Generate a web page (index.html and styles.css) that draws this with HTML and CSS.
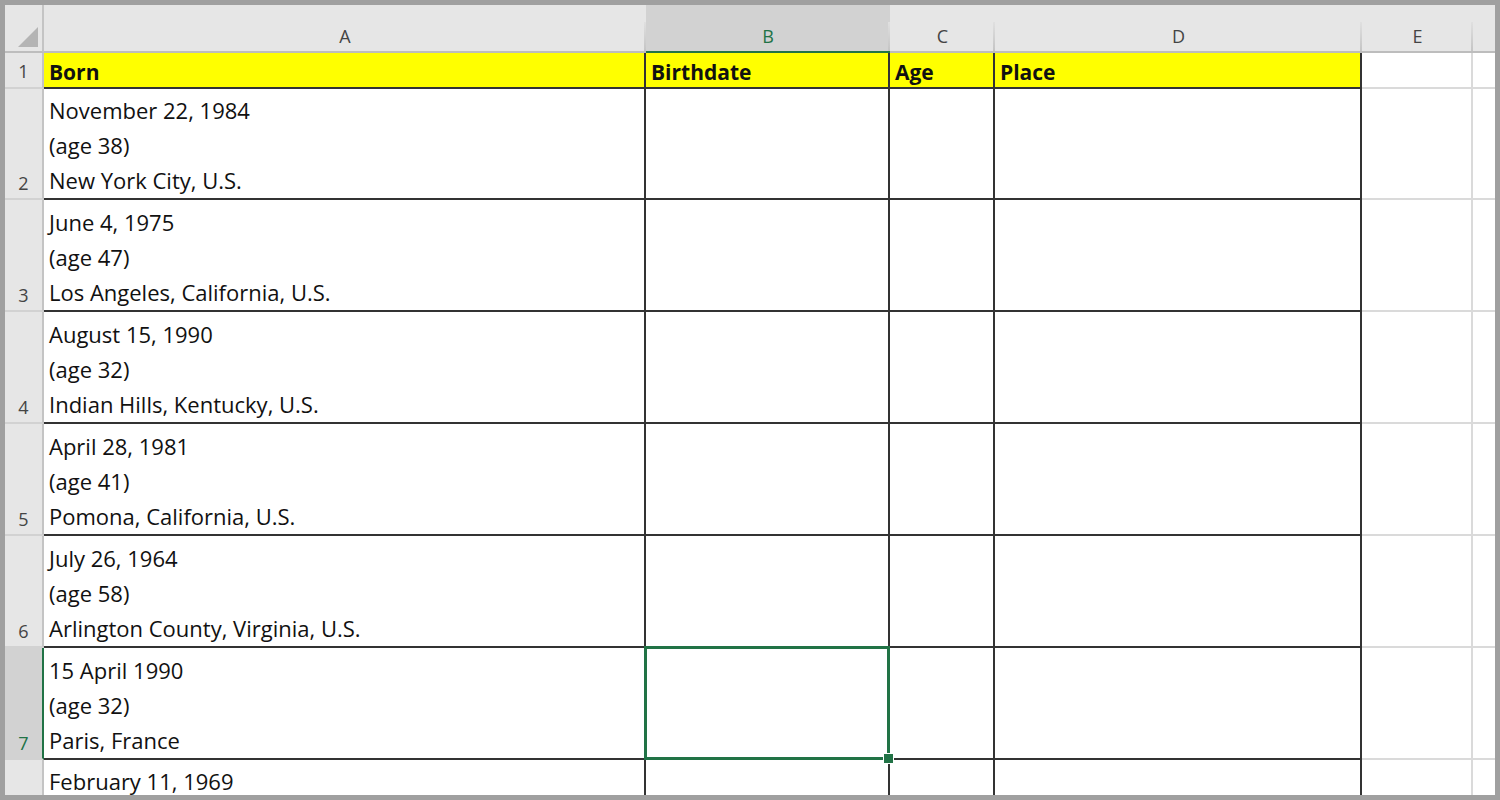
FILE: index.html
```html
<!DOCTYPE html>
<html>
<head>
<meta charset="utf-8">
<link rel="stylesheet" href="styles.css">
</head>
<body>
<div class="frame">
  <div class="sheet">
    <div class="corner"><svg width="22" height="22" viewBox="0 0 22 22"><polygon points="21,1 21,21 1,21" fill="#b4b4b4"/></svg></div>
    <div class="colhead">A</div>
    <div class="colhead sel">B</div>
    <div class="colhead">C</div>
    <div class="colhead">D</div>
    <div class="colhead">E</div>
    <div class="colhead last"></div>

    <div class="rowhead short">1</div>
    <div class="cell hdr"><b>Born</b></div>
    <div class="cell hdr"><b>Birthdate</b></div>
    <div class="cell hdr"><b>Age</b></div>
    <div class="cell hdr"><b>Place</b></div>
    <div class="plain"></div>
    <div class="plain last"></div>

    <div class="rowhead">2</div>
    <div class="cell text"><span>November 22, 1984</span><span>(age 38)</span><span>New York City, U.S.</span></div>
    <div class="cell"></div><div class="cell"></div><div class="cell"></div>
    <div class="plain"></div><div class="plain last"></div>

    <div class="rowhead">3</div>
    <div class="cell text"><span>June 4, 1975</span><span>(age 47)</span><span>Los Angeles, California, U.S.</span></div>
    <div class="cell"></div><div class="cell"></div><div class="cell"></div>
    <div class="plain"></div><div class="plain last"></div>

    <div class="rowhead">4</div>
    <div class="cell text"><span>August 15, 1990</span><span>(age 32)</span><span>Indian Hills, Kentucky, U.S.</span></div>
    <div class="cell"></div><div class="cell"></div><div class="cell"></div>
    <div class="plain"></div><div class="plain last"></div>

    <div class="rowhead">5</div>
    <div class="cell text"><span>April 28, 1981</span><span>(age 41)</span><span>Pomona, California, U.S.</span></div>
    <div class="cell"></div><div class="cell"></div><div class="cell"></div>
    <div class="plain"></div><div class="plain last"></div>

    <div class="rowhead">6</div>
    <div class="cell text"><span>July 26, 1964</span><span>(age 58)</span><span>Arlington County, Virginia, U.S.</span></div>
    <div class="cell"></div><div class="cell"></div><div class="cell"></div>
    <div class="plain"></div><div class="plain last"></div>

    <div class="rowhead sel">7</div>
    <div class="cell text"><span>15 April 1990</span><span>(age 32)</span><span>Paris, France</span></div>
    <div class="cell active"></div><div class="cell"></div><div class="cell"></div>
    <div class="plain"></div><div class="plain last"></div>

    <div class="rowhead"></div>
    <div class="cell text toptext"><span>February 11, 1969</span></div>
    <div class="cell"></div><div class="cell"></div><div class="cell"></div>
    <div class="plain"></div><div class="plain last"></div>
  </div>
</div>
</body>
</html>
```

FILE: styles.css
```css
* { box-sizing: border-box; }
html, body { margin: 0; padding: 0; }
body { background: #a0a0a0; }
.frame {
  width: 1500px;
  height: 800px;
  border: 5px solid #a0a0a0;
  background: #ffffff;
  overflow: hidden;
}
.sheet {
  display: grid;
  grid-template-columns: 39px 602px 244px 105px 367px 111px 1fr;
  grid-template-rows: 48px 36px 111px repeat(6, 112px);
  font-family: "Open Sans", "Noto Sans", sans-serif;
  color: #111111;
}
.corner {
  background: #e6e6e6;
  border-right: 2px solid #c4c4c4;
  border-bottom: 2px solid #bdbdbd;
  display: flex;
  align-items: flex-end;
  justify-content: flex-end;
  padding: 0 3px 3px 0;
}
.colhead {
  position: relative;
  background: #e6e6e6;
  border-bottom: 2px solid #bdbdbd;
  display: flex;
  align-items: center;
  justify-content: center;
  font-size: 18px;
  color: #444444;
  padding-top: 16px;
}
.colhead::after {
  content: "";
  position: absolute;
  right: 0;
  top: 17px;
  bottom: 0;
  width: 2px;
  background: linear-gradient(#e0e0e0, #c4c4c4);
}
.colhead.sel {
  background: #d2d2d2;
  border-bottom-color: #217346;
  color: #217346;
}
.colhead.last::after { display: none; }
.rowhead {
  background: #e6e6e6;
  border-right: 2px solid #c4c4c4;
  border-bottom: 2px solid #d2d2d2;
  display: flex;
  align-items: flex-end;
  justify-content: center;
  font-size: 18px;
  color: #444444;
  padding-bottom: 3px;
}
.rowhead.short { align-items: center; padding-bottom: 0; padding-top: 2px; }
.rowhead.sel {
  background: #d2d2d2;
  border-right-color: #217346;
  color: #217346;
}
.cell {
  border-right: 2px solid #333333;
  border-bottom: 2px solid #333333;
  font-size: 22px;
  padding-left: 5px;
}
.hdr {
  background: #ffff00;
  display: flex;
  align-items: center;
  padding-top: 3px;
  font-size: 21px;
}
.hdr b { font-weight: 700; }
.text {
  display: flex;
  flex-direction: column;
  justify-content: flex-end;
  line-height: 35px;
  padding-bottom: 0;
  white-space: nowrap;
}
.toptext { justify-content: flex-start; padding-top: 4px; }
.plain {
  border-right: 2px solid #dadada;
  border-bottom: 2px solid #dadada;
}
.last { border-right: 0; }
.active {
  position: relative;
}
.active::before {
  content: "";
  position: absolute;
  left: -2px;
  top: -2px;
  right: -2px;
  bottom: -2px;
  border: 3px solid #217346;
  box-shadow: inset 0 0 0 1px #ffffff;
}
.active::after {
  content: "";
  position: absolute;
  right: -6px;
  bottom: -6px;
  width: 9px;
  height: 9px;
  background: #217346;
  border: 1px solid #ffffff;
}
```
